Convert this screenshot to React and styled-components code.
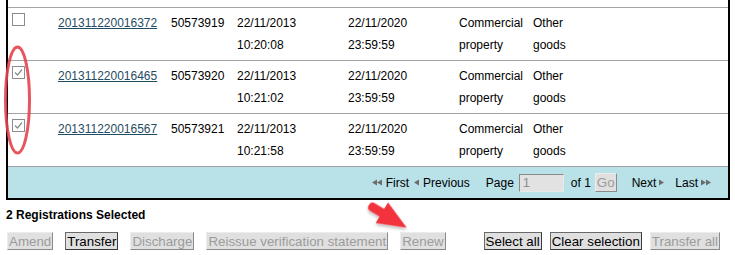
import React from 'react';
import styled, { createGlobalStyle } from 'styled-components';

const GlobalStyle = createGlobalStyle`
  html, body {
    margin: 0;
    padding: 0;
    background: #ffffff;
  }
  body {
    font-family: "Liberation Sans", Arial, sans-serif;
    font-size: 12px;
    color: #000;
  }
`;

const Page = styled.div`
  position: relative;
  width: 735px;
  height: 255px;
  overflow: hidden;
`;

const Results = styled.div`
  margin-left: 6px;
  width: 724px;
  box-sizing: border-box;
  border-left: 2px solid #000;
  border-right: 2px solid #000;
  border-bottom: 2px solid #000;
`;

const TopGap = styled.div`
  height: 7px;
`;

const Row = styled.div`
  display: grid;
  grid-template-columns: 50px 113px 66px 111px 111px 74px 50px 1fr;
  border-top: 1px solid #a3a3a3;
  padding: 4px 0;
  line-height: 22px;
`;

const Cell = styled.div`
  white-space: pre-line;
`;

const CheckCell = styled.div`
  padding-left: 4px;
`;

const Box = styled.span`
  display: block;
  width: 11px;
  height: 11px;
  margin-top: 1px;
  border: 1px solid #8c8c8c;
  background: #fff;
  position: relative;
`;

const RegLink = styled.a`
  color: #1f4c62;
  text-decoration: underline;
  cursor: pointer;
`;

const Footer = styled.div`
  height: 31px;
  border-top: 1px solid #a3a3a3;
  background: #b8e1e8;
  display: flex;
  align-items: center;
  justify-content: flex-end;
  padding-right: 16px;
  font-size: 12px;
`;

const PagerLink = styled.span`
  display: inline-flex;
  align-items: center;
  gap: 3px;
  margin-left: ${p => p.$ml || 0}px;
  color: #000;
`;

const PageInput = styled.input`
  box-sizing: border-box;
  width: 45px;
  height: 18px;
  margin-left: 5px;
  padding: 0 3px;
  background: #e2e2e2;
  border: 1px solid;
  border-color: #8a8a8a #e8e8e8 #e8e8e8 #8a8a8a;
  font: 13px "Liberation Sans", Arial, sans-serif;
  color: #8f8f8f;
`;

const Btn = styled.button`
  box-sizing: border-box;
  height: ${p => p.$h || 18}px;
  padding: 0 1px;
  margin-left: ${p => p.$ml || 0}px;
  background: #e0e0e0;
  border: 1px solid;
  border-color: ${p => (p.disabled ? '#ececec #8a8a8a #8a8a8a #ececec' : '#6a6a6a #3a3a3a #3a3a3a #6a6a6a')};
  border-radius: 0;
  font: 13.33px "Liberation Sans", Arial, sans-serif;
  line-height: 15px;
  color: ${p => (p.disabled ? '#9c9c9c' : '#000')};
  white-space: nowrap;
`;

const Summary = styled.div`
  margin: 8px 0 0 6px;
  font-weight: bold;
  font-size: 12px;
  line-height: 14px;
`;

const Actions = styled.div`
  display: flex;
  justify-content: space-between;
  align-items: center;
  margin-top: 10px;
  padding: 0 15px 0 7px;
`;

const Group = styled.div`
  display: flex;
  align-items: center;
  gap: ${p => p.$gap}px;
`;

const Overlay = styled.svg`
  position: absolute;
  left: 0;
  top: 0;
  pointer-events: none;
`;

const Tri = ({ dir = 'left', count = 1 }) => {
  const w = 5 * count + 1;
  return (
    <svg width={w} height="7" viewBox={`0 0 ${w} 7`}>
      {Array.from({ length: count }).map((_, i) => {
        const x = i * 5;
        const pts = dir === 'left'
          ? `${x + 5},0.5 ${x + 5},6.5 ${x},3.5`
          : `${x},0.5 ${x},6.5 ${x + 5},3.5`;
        return <polygon key={i} points={pts} fill="#6b6b6b" />;
      })}
    </svg>
  );
};

const Check = () => (
  <svg width="11" height="11" viewBox="0 0 11 11" style={{ position: 'absolute', left: 0, top: 0 }}>
    <path d="M2 5.5 L4.5 8 L9 2.5" fill="none" stroke="#8a8a8a" strokeWidth="1.2" />
  </svg>
);

const rows = [
  { id: '201311220016372', num: '50573919', reg: '22/11/2013\n10:20:08', checked: false },
  { id: '201311220016465', num: '50573920', reg: '22/11/2013\n10:21:02', checked: true },
  { id: '201311220016567', num: '50573921', reg: '22/11/2013\n10:21:58', checked: true },
];

export default function App() {
  return (
    <Page>
      <GlobalStyle />
      <Results>
        <TopGap />
        {rows.map(r => (
          <Row key={r.id}>
            <CheckCell>
              <Box>{r.checked && <Check />}</Box>
            </CheckCell>
            <Cell><RegLink>{r.id}</RegLink></Cell>
            <Cell>{r.num}</Cell>
            <Cell>{r.reg}</Cell>
            <Cell>{'22/11/2020\n23:59:59'}</Cell>
            <Cell>{'Commercial\nproperty'}</Cell>
            <Cell>{'Other\ngoods'}</Cell>
            <Cell />
          </Row>
        ))}
        <Footer>
          <PagerLink><Tri dir="left" count={2} />First</PagerLink>
          <PagerLink $ml={5}><Tri dir="left" />Previous</PagerLink>
          <PagerLink $ml={16}>Page</PagerLink>
          <PageInput value="1" disabled readOnly />
          <PagerLink $ml={7}>of 1</PagerLink>
          <Btn disabled $ml={4} $h={19}>Go</Btn>
          <PagerLink $ml={15}>Next<Tri dir="right" /></PagerLink>
          <PagerLink $ml={10}>Last<Tri dir="right" count={2} /></PagerLink>
        </Footer>
      </Results>
      <Summary>2 Registrations Selected</Summary>
      <Actions>
        <Group $gap={12}>
          <Btn disabled>Amend</Btn>
          <Btn>Transfer</Btn>
          <Btn disabled>Discharge</Btn>
          <Btn disabled>Reissue verification statement</Btn>
          <Btn disabled>Renew</Btn>
        </Group>
        <Group $gap={8}>
          <Btn>Select all</Btn>
          <Btn>Clear selection</Btn>
          <Btn disabled>Transfer all</Btn>
        </Group>
      </Actions>
      <Overlay width="735" height="255" viewBox="0 0 735 255">
        <defs>
          <filter id="sh" x="-20%" y="-20%" width="140%" height="140%">
            <feDropShadow dx="1" dy="2" stdDeviation="1.5" floodColor="#000" floodOpacity="0.25" />
          </filter>
        </defs>
        <ellipse cx="17.5" cy="100" rx="12" ry="53" fill="none" stroke="#e4434e" strokeWidth="3" opacity="0.9" />
        <g transform="translate(369 205) rotate(31)" filter="url(#sh)">
          <rect x="0" y="-4.5" width="19" height="9" rx="4" fill="#f2323d" />
          <polygon points="15,-12 44,0 15,12" fill="#f2323d" />
        </g>
      </Overlay>
    </Page>
  );
}
